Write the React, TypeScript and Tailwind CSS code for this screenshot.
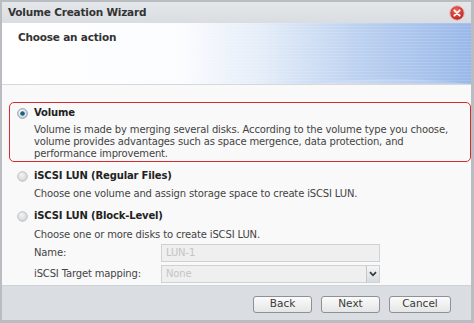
import React from "react";

const font = { fontFamily: '"DejaVu Sans", Verdana, sans-serif' };

function Radio({ checked }: { checked?: boolean }) {
  return (
    <svg width="11" height="11" viewBox="0 0 11 11" className="shrink-0">
      <defs>
        <radialGradient id={checked ? "rg1" : "rg0"} cx="0.4" cy="0.35" r="0.7">
          <stop offset="0" stopColor={checked ? "#ffffff" : "#f4f4f4"} />
          <stop offset="1" stopColor={checked ? "#c9d3dc" : "#cfd2d5"} />
        </radialGradient>
      </defs>
      <circle cx="5.5" cy="5.5" r="4.8" fill={`url(#${checked ? "rg1" : "rg0"})`} stroke={checked ? "#7e8d99" : "#b9bdc1"} strokeWidth="0.9" />
      {checked && <circle cx="5.5" cy="5.5" r="2.3" fill="#1f5d7c" />}
    </svg>
  );
}

function CloseIcon() {
  return (
    <svg width="16" height="16" viewBox="0 0 16 16">
      <defs>
        <radialGradient id="cg" cx="0.45" cy="0.35" r="0.7">
          <stop offset="0" stopColor="#f26a5e" />
          <stop offset="1" stopColor="#b71b1c" />
        </radialGradient>
      </defs>
      <circle cx="8" cy="8" r="7.2" fill="url(#cg)" stroke="#e9b7b3" strokeWidth="1" />
      <path d="M5.3 5.3 L10.7 10.7 M10.7 5.3 L5.3 10.7" stroke="#ffffff" strokeWidth="1.8" strokeLinecap="round" />
    </svg>
  );
}

function Btn({ label, w }: { label: string; w: string }) {
  return (
    <div
      className={`${w} h-[17px] flex items-center justify-center rounded-[3px] border border-[#8d9094] bg-[linear-gradient(to_bottom,#fbfbfb,#e4e5e6)] text-[10.5px] text-[#3a3a3a]`}
    >
      {label}
    </div>
  );
}

export default function App() {
  return (
    <div
      className="w-[474px] h-[323px] bg-[#b9bdc2] border-t-2 border-l-2 border-r-[3px] border-b-[3px] border-[#b9bdc2] flex flex-col overflow-hidden text-[#333]"
      style={font}
    >
      {/* Title bar */}
      <div className="h-[21px] shrink-0 bg-[linear-gradient(to_bottom,#e4e7ea,#d9dde1)] flex items-center justify-between pl-[6px] pr-[6px]">
        <span className="text-[10.5px] font-bold text-[#333] tracking-[-0.2px]">Volume Creation Wizard</span>
        <CloseIcon />
      </div>

      {/* Header */}
      <div className="h-[62px] shrink-0 border-b border-[#d6d8da] bg-[linear-gradient(to_right,#ffffff_0%,#fbfcfe_38%,#e3ecf8_56%,#bcd1f0_76%,#99b8e9_100%)] relative overflow-hidden">
        <div className="absolute inset-0 bg-[repeating-linear-gradient(to_bottom,rgba(255,255,255,0.12)_0px,rgba(255,255,255,0.12)_1px,transparent_1px,transparent_3px)]" />
        <div className="absolute left-[230px] top-[56px] w-[320px] h-[80px] rounded-[50%] bg-[rgba(255,255,255,0.18)]" />
        <div className="relative pl-[16px] pt-[7px] text-[10.5px] font-bold text-[#333] tracking-[-0.2px]">Choose an action</div>
      </div>

      {/* Content */}
      <div className="flex-1 bg-[#f9f9f9] flex flex-col pl-[7px] text-[10px] leading-[12px] tracking-[-0.15px]">
        <div className="mt-[17px] mr-0 h-[60px] border-[1.5px] border-[#d92b2f] rounded-[5px] flex flex-col pl-[7px]">
          <div className="mt-[3px] h-[14px] flex items-center gap-[6px]">
            <Radio checked />
            <span className="font-bold text-[#222]">Volume</span>
          </div>
          <div className="mt-[4px] pl-[17px] text-[#444]">
            <div>Volume is made by merging several disks. According to the volume type you choose,</div>
            <div>volume provides advantages such as space mergence, data protection, and</div>
            <div>performance improvement.</div>
          </div>
        </div>

        <div className="pl-[8px] flex flex-col">
          <div className="mt-[7px] h-[14px] flex items-center gap-[6px]">
            <Radio />
            <span className="font-bold text-[#222]">iSCSI LUN (Regular Files)</span>
          </div>
          <div className="mt-[5px] pl-[17px] text-[#444]">Choose one volume and assign storage space to create iSCSI LUN.</div>

          <div className="mt-[9px] h-[14px] flex items-center gap-[6px]">
            <Radio />
            <span className="font-bold text-[#222]">iSCSI LUN (Block-Level)</span>
          </div>
          <div className="mt-[6px] pl-[17px] text-[#444]">Choose one or more disks to create iSCSI LUN.</div>

          <div className="mt-[3px] pl-[17px] flex items-center h-[18px]">
            <span className="w-[127px] text-[#444]">Name:</span>
            <div className="w-[219px] h-[18px] border border-[#cfd1d3] bg-[#efefef] flex items-center pl-[4px] text-[#c4c4c4]">LUN-1</div>
          </div>
          <div className="mt-[3px] pl-[17px] flex items-center h-[18px]">
            <span className="w-[127px] text-[#444]">iSCSI Target mapping:</span>
            <div className="w-[219px] h-[18px] border border-[#cfd1d3] bg-[#efefef] flex items-center">
              <span className="flex-1 pl-[4px] text-[#c4c4c4]">None</span>
              <div className="w-[13px] h-full border-l border-[#c4c7ca] bg-[linear-gradient(to_bottom,#f4f5f6,#d9dcdf)] flex items-center justify-center">
                <svg width="8" height="6" viewBox="0 0 8 6">
                  <path d="M1 1.2 L4 4.3 L7 1.2" fill="none" stroke="#2f3a44" strokeWidth="1.7" />
                </svg>
              </div>
            </div>
          </div>
        </div>
      </div>

      {/* Footer */}
      <div className="h-[35px] shrink-0 bg-[#dadde1] border-t border-[#cfd2d6] flex items-center justify-end gap-[9px] pr-[20px] pt-[2px]">
        <Btn label="Back" w="w-[59px]" />
        <Btn label="Next" w="w-[59px]" />
        <Btn label="Cancel" w="w-[62px]" />
      </div>
    </div>
  );
}
